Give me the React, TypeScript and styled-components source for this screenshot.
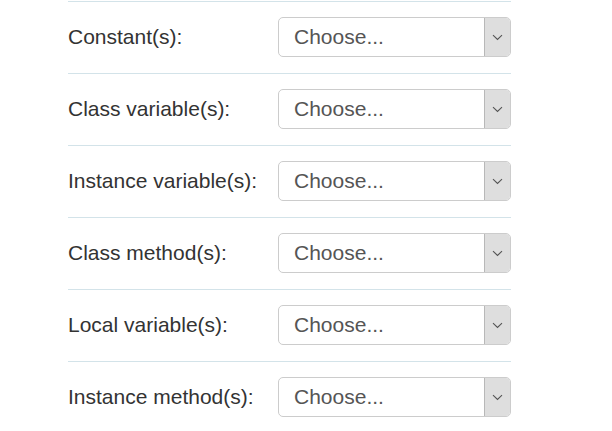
import styled, { createGlobalStyle } from 'styled-components';

const GlobalStyle = createGlobalStyle`
    body {
        margin: 0;
        background: #fff;
        font-family: "Liberation Sans", Arial, sans-serif;
    }
`;

const Form = styled('div')`
    width: 443px;
    margin: 1px 0 0 68px;
    display: flex;
    flex-direction: column;
`;

const Row = styled('div')`
    display: grid;
    grid-template-columns: 210px 1fr;
    align-items: center;
    padding: 15px 0 16px;
    border-top: 1px solid #d3e3e9;
`;

const Label = styled('label')`
    font-size: 21px;
    color: #333;
`;

const Select = styled('div')`
    height: 40px;
    box-sizing: border-box;
    border: 1px solid #cccccc;
    border-radius: 5px;
    display: flex;
    align-items: stretch;
    overflow: hidden;
    background: #fff;
`;

const Value = styled('span')`
    flex: 1;
    display: flex;
    align-items: center;
    padding-left: 15px;
    font-size: 21px;
    color: #555;
`;

const Toggle = styled('span')`
    width: 25px;
    display: flex;
    align-items: center;
    justify-content: center;
    background: #dedede;
    border-left: 1px solid #b8b8b8;
`;

const Chevron = () => (
    <svg width="11" height="7" viewBox="0 0 11 7">
        <path d="M1 1.2 L5.5 5.5 L10 1.2" fill="none" stroke="#555" strokeWidth="1.1" />
    </svg>
);

const fields = [
    'Constant(s):',
    'Class variable(s):',
    'Instance variable(s):',
    'Class method(s):',
    'Local variable(s):',
    'Instance method(s):',
];

const App = () => (
    <>
        <GlobalStyle />
        <Form>
            {fields.map((field) => (
                <Row key={field}>
                    <Label>{field}</Label>
                    <Select>
                        <Value>Choose...</Value>
                        <Toggle>
                            <Chevron />
                        </Toggle>
                    </Select>
                </Row>
            ))}
        </Form>
    </>
);

export default App;
